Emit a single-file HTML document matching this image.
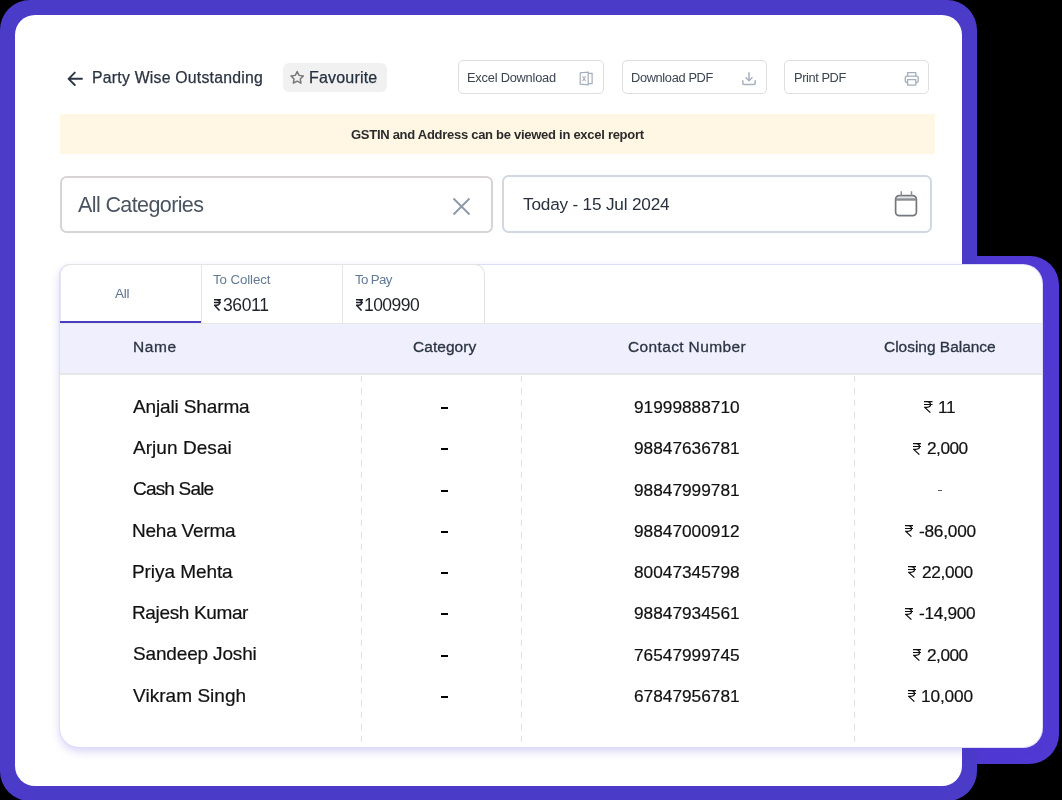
<!DOCTYPE html><html><head><meta charset="utf-8"><style>
*{margin:0;padding:0;box-sizing:border-box}
html,body{width:1062px;height:800px;overflow:hidden;background:#000}
body{position:relative;font-family:"Liberation Sans",sans-serif}
.abs{position:absolute}
.t{position:absolute;white-space:nowrap;will-change:transform}
</style></head><body>
<div class="abs" style="left:560px;top:256px;width:498.5px;height:508px;border-radius:29px 29px 30px 30px;background:#5039D3"></div><div class="abs" style="left:0;top:0;width:977px;height:801px;border-radius:30px;background:#4B3BC9"></div><div class="abs" style="left:15px;top:15px;width:947px;height:771px;border-radius:20px;background:#fff"></div><svg class="abs" style="left:66px;top:69.6px" width="18" height="18" viewBox="0 0 18 18" fill="none" stroke="#2D3643" stroke-width="1.9" stroke-linecap="round" stroke-linejoin="round"><path d="M16 8.8H2.6M8.8 2.6L2.6 8.8L8.8 15"/></svg><div class="t" style="left:92.40px;top:70.03px;font-size:15.8px;line-height:15.8px;color:#2A3441;font-weight:normal;letter-spacing:0.231px;-webkit-text-stroke:0.25px #2A3441">Party Wise Outstanding</div>
<div class="abs" style="left:283px;top:63px;width:104px;height:29px;border-radius:6px;background:#F1F1F1"></div><svg class="abs" style="left:285px;top:65px" width="25" height="25" viewBox="0 0 25 25" fill="none" stroke="#777777" stroke-width="1.45" stroke-linejoin="round"><path d="M12.15 6.5L14.05 10.35L18.3 10.97L15.23 13.97L15.95 18.2L12.15 16.21L8.35 18.2L9.07 13.97L6 10.97L10.25 10.35Z"/></svg><div class="t" style="left:309.40px;top:69.76px;font-size:16px;line-height:16px;color:#263140;font-weight:normal;letter-spacing:0.188px;-webkit-text-stroke:0.25px #263140">Favourite</div>
<div class="abs" style="left:458px;top:60px;width:146px;height:34px;border:1px solid #DEDEDE;border-radius:5px;background:#fff"></div><div class="abs" style="left:621.5px;top:60px;width:145px;height:34px;border:1px solid #DEDEDE;border-radius:5px;background:#fff"></div><div class="abs" style="left:784px;top:60px;width:144.5px;height:34px;border:1px solid #DEDEDE;border-radius:5px;background:#fff"></div><div class="t" style="left:467.40px;top:72.06px;font-size:12.8px;line-height:12.8px;color:#3B4450;font-weight:normal;letter-spacing:-0.203px;">Excel Download</div>
<div class="t" style="left:631.00px;top:72.06px;font-size:12.8px;line-height:12.8px;color:#3B4450;font-weight:normal;letter-spacing:-0.340px;">Download PDF</div>
<div class="t" style="left:793.70px;top:72.06px;font-size:12.8px;line-height:12.8px;color:#3B4450;font-weight:normal;letter-spacing:-0.406px;">Print PDF</div>
<svg class="abs" style="left:578px;top:71px" width="16" height="15" viewBox="0 0 16 15" fill="none" stroke="#A3ADBD" stroke-width="1.2"><path d="M2.2 1.8L10.2 1.2V13.8L2.2 13.2Z"/><path d="M10.2 2.4H14.1V12.7H10.2"/><path d="M4.6 5.2L7.6 10M7.6 5.2L4.6 10" stroke-width="1.1"/></svg><svg class="abs" style="left:741px;top:71px" width="16" height="15" viewBox="0 0 16 15" fill="none" stroke="#A8B1C0" stroke-width="1.5" stroke-linecap="round" stroke-linejoin="round"><path d="M8 1.8V9.5M5 6.8L8 9.8L11 6.8"/><path d="M1.8 9.8V12.2C1.8 13 2.3 13.4 3 13.4H13C13.7 13.4 14.2 13 14.2 12.2V9.8"/></svg><svg class="abs" style="left:904px;top:71px" width="16" height="16" viewBox="0 0 16 16" fill="none" stroke="#A3ADBD" stroke-width="1.3" stroke-linejoin="round"><path d="M3.6 5.2V1.6H11.8V5.2"/><path d="M3.5 11.3H2.4C1.7 11.3 1.3 10.9 1.3 10.2V6.6C1.3 5.8 1.8 5.2 2.6 5.2H12.9C13.6 5.2 14.2 5.8 14.2 6.6V10.2C14.2 10.9 13.8 11.3 13.1 11.3H11.9"/><path d="M3.6 8.7H11.8V14.1H3.6Z"/></svg><div class="abs" style="left:60px;top:114px;width:875px;height:40px;background:#FFF6E4"></div><div class="t" style="left:351.00px;top:128.00px;font-size:13px;line-height:13px;color:#2B2B2B;font-weight:bold;letter-spacing:-0.278px;">GSTIN and Address can be viewed in excel report</div>
<div class="abs" style="left:60px;top:176px;width:433px;height:56.5px;border:2px solid #D8D4D4;border-radius:6.5px;background:#fff"></div><div class="t" style="left:77.90px;top:195.30px;font-size:21.5px;line-height:21.5px;color:#4A5461;font-weight:normal;letter-spacing:-0.607px;">All Categories</div>
<svg class="abs" style="left:451px;top:196px" width="21" height="21" viewBox="0 0 21 21" fill="none" stroke="#8E9AAA" stroke-width="2"><path d="M2.5 2.5L18.5 18.5M18.5 2.5L2.5 18.5"/></svg><div class="abs" style="left:502px;top:175px;width:430px;height:57.5px;border:2px solid #D2D8DF;border-radius:6.5px;background:#fff"></div><div class="t" style="left:522.90px;top:196.24px;font-size:17.2px;line-height:17.2px;color:#28313D;font-weight:normal;letter-spacing:-0.192px;">Today - 15 Jul 2024</div>
<svg class="abs" style="left:892px;top:189px" width="28" height="30" viewBox="0 0 28 30" fill="none" stroke="#74787E" stroke-width="1.7"><path d="M4 8.5H24V11H4Z" fill="#C9CBCF" stroke="none"/><rect x="3.6" y="6.6" width="20.8" height="20" rx="3.6"/><path d="M3.6 10.6H24.4" stroke-width="2.2" stroke="#8A8E93"/><path d="M9.3 2.3V6.8M19.5 2.3V6.8" stroke-width="1.5" stroke="#8C9095"/></svg><div class="abs" style="left:60px;top:265px;width:982px;height:482px;border-radius:10px 19px 19px 19px;background:#fff;box-shadow:0 0 0 1px #DCDCFC, 0 4px 10px rgba(80,60,210,0.24)"></div><div class="abs" style="left:60px;top:264px;width:425px;height:59px;border:1px solid #E3E3E3;border-bottom:none;border-left-color:#E6E4F6;border-radius:10px 10px 0 0;background:#fff"></div><div class="abs" style="left:201px;top:264px;width:1px;height:59px;background:#E6E6E6"></div><div class="abs" style="left:342px;top:264px;width:1px;height:59px;background:#E6E6E6"></div><div class="abs" style="left:60px;top:321px;width:141px;height:2px;background:#4B3BC9"></div><div class="t" style="left:115.00px;top:286.77px;font-size:13.5px;line-height:13.5px;color:#5F7390;font-weight:normal;letter-spacing:-0.252px;">All</div>
<div class="t" style="left:213.10px;top:273.34px;font-size:13.3px;line-height:13.3px;color:#627A96;font-weight:normal;letter-spacing:-0.099px;">To Collect</div>
<div class="t" style="left:355.10px;top:273.34px;font-size:13.3px;line-height:13.3px;color:#627A96;font-weight:normal;letter-spacing:-0.640px;">To Pay</div>
<svg class="abs" style="left:213.70px;top:299.30px" width="7.4" height="12" viewBox="0 0 8 12" preserveAspectRatio="none" fill="none" stroke="#1E232A" stroke-width="1.5"><path d="M0 0.7H8M0 3.5H8M0.6 0.7H2.8C5 0.7 6.1 2 6.1 3.6C6.1 5.2 4.8 6.3 2.8 6.3H0.7L6 11.6"/></svg>
<div class="t" style="left:222.90px;top:297.39px;font-size:17.5px;line-height:17.5px;color:#1E232A;font-weight:normal;letter-spacing:-0.358px;">36011</div>
<svg class="abs" style="left:355.60px;top:299.30px" width="7.4" height="12" viewBox="0 0 8 12" preserveAspectRatio="none" fill="none" stroke="#1E232A" stroke-width="1.5"><path d="M0 0.7H8M0 3.5H8M0.6 0.7H2.8C5 0.7 6.1 2 6.1 3.6C6.1 5.2 4.8 6.3 2.8 6.3H0.7L6 11.6"/></svg>
<div class="t" style="left:363.80px;top:297.39px;font-size:17.5px;line-height:17.5px;color:#1E232A;font-weight:normal;letter-spacing:-0.553px;">100990</div>
<div class="abs" style="left:60px;top:323px;width:982px;height:52px;background:#F0EFFD;border-top:1px solid #E6E6E6;border-bottom:2px solid #E7E7EA"></div><div class="t" style="left:132.90px;top:338.78px;font-size:15.5px;line-height:15.5px;color:#2C3542;font-weight:normal;letter-spacing:0.591px;-webkit-text-stroke:0.3px #2C3542">Name</div>
<div class="t" style="left:412.90px;top:339.08px;font-size:15.5px;line-height:15.5px;color:#2C3542;font-weight:normal;letter-spacing:0.037px;-webkit-text-stroke:0.3px #2C3542">Category</div>
<div class="t" style="left:627.70px;top:339.08px;font-size:15.5px;line-height:15.5px;color:#2C3542;font-weight:normal;letter-spacing:0.362px;-webkit-text-stroke:0.3px #2C3542">Contact Number</div>
<div class="t" style="left:884.25px;top:339.08px;font-size:15.5px;line-height:15.5px;color:#2C3542;font-weight:normal;letter-spacing:-0.021px;-webkit-text-stroke:0.3px #2C3542">Closing Balance</div>
<div class="abs" style="left:361px;top:376px;width:1px;height:368px;background:repeating-linear-gradient(to bottom,#E2E2E2 0 6px,transparent 6px 12px)"></div><div class="abs" style="left:520.5px;top:376px;width:1px;height:368px;background:repeating-linear-gradient(to bottom,#E2E2E2 0 6px,transparent 6px 12px)"></div><div class="abs" style="left:854px;top:376px;width:1px;height:368px;background:repeating-linear-gradient(to bottom,#E2E2E2 0 6px,transparent 6px 12px)"></div><div class="t" style="left:133.10px;top:396.72px;font-size:19px;line-height:19px;color:#111;font-weight:normal;letter-spacing:-0.134px;-webkit-text-stroke:0.2px #111">Anjali Sharma</div>
<div class="abs" style="left:441px;top:407.00px;width:7px;height:2px;background:#000"></div><div class="t" style="left:634.30px;top:399.00px;font-size:17.25px;line-height:17.25px;color:#111;font-weight:normal;letter-spacing:0.006px;-webkit-text-stroke:0.2px #111">91999888710</div>
<svg class="abs" style="left:924.40px;top:401.40px" width="8.5" height="12" viewBox="0 0 8 12" preserveAspectRatio="none" fill="none" stroke="#111" stroke-width="1.2"><path d="M0 0.7H8M0 3.5H8M0.6 0.7H2.8C5 0.7 6.1 2 6.1 3.6C6.1 5.2 4.8 6.3 2.8 6.3H0.7L6 11.6"/></svg>
<div class="t" style="left:938.20px;top:399.00px;font-size:17.25px;line-height:17.25px;color:#111;font-weight:normal;letter-spacing:-0.313px;-webkit-text-stroke:0.2px #111">11</div>
<div class="t" style="left:133.10px;top:437.98px;font-size:19px;line-height:19px;color:#111;font-weight:normal;letter-spacing:0.051px;-webkit-text-stroke:0.2px #111">Arjun Desai</div>
<div class="abs" style="left:441px;top:448.26px;width:7px;height:2px;background:#000"></div><div class="t" style="left:634.30px;top:440.26px;font-size:17.25px;line-height:17.25px;color:#111;font-weight:normal;letter-spacing:0.006px;-webkit-text-stroke:0.2px #111">98847636781</div>
<svg class="abs" style="left:912.50px;top:442.66px" width="8.5" height="12" viewBox="0 0 8 12" preserveAspectRatio="none" fill="none" stroke="#111" stroke-width="1.2"><path d="M0 0.7H8M0 3.5H8M0.6 0.7H2.8C5 0.7 6.1 2 6.1 3.6C6.1 5.2 4.8 6.3 2.8 6.3H0.7L6 11.6"/></svg>
<div class="t" style="left:926.50px;top:440.26px;font-size:17.25px;line-height:17.25px;color:#111;font-weight:normal;letter-spacing:-0.493px;-webkit-text-stroke:0.2px #111">2,000</div>
<div class="t" style="left:133.10px;top:479.24px;font-size:19px;line-height:19px;color:#111;font-weight:normal;letter-spacing:-0.812px;-webkit-text-stroke:0.2px #111">Cash Sale</div>
<div class="abs" style="left:441px;top:489.52px;width:7px;height:2px;background:#000"></div><div class="t" style="left:634.30px;top:481.52px;font-size:17.25px;line-height:17.25px;color:#111;font-weight:normal;letter-spacing:0.006px;-webkit-text-stroke:0.2px #111">98847999781</div>
<div class="abs" style="left:938px;top:489.62px;width:4px;height:1.2px;background:#555"></div><div class="t" style="left:132.10px;top:520.50px;font-size:19px;line-height:19px;color:#111;font-weight:normal;letter-spacing:-0.216px;-webkit-text-stroke:0.2px #111">Neha Verma</div>
<div class="abs" style="left:441px;top:530.78px;width:7px;height:2px;background:#000"></div><div class="t" style="left:634.30px;top:522.78px;font-size:17.25px;line-height:17.25px;color:#111;font-weight:normal;letter-spacing:0.006px;-webkit-text-stroke:0.2px #111">98847000912</div>
<svg class="abs" style="left:904.55px;top:525.18px" width="8.5" height="12" viewBox="0 0 8 12" preserveAspectRatio="none" fill="none" stroke="#111" stroke-width="1.2"><path d="M0 0.7H8M0 3.5H8M0.6 0.7H2.8C5 0.7 6.1 2 6.1 3.6C6.1 5.2 4.8 6.3 2.8 6.3H0.7L6 11.6"/></svg>
<div class="t" style="left:918.55px;top:522.78px;font-size:17.25px;line-height:17.25px;color:#111;font-weight:normal;letter-spacing:-0.235px;-webkit-text-stroke:0.2px #111">-86,000</div>
<div class="t" style="left:132.10px;top:561.76px;font-size:19px;line-height:19px;color:#111;font-weight:normal;letter-spacing:-0.071px;-webkit-text-stroke:0.2px #111">Priya Mehta</div>
<div class="abs" style="left:441px;top:572.04px;width:7px;height:2px;background:#000"></div><div class="t" style="left:634.30px;top:564.04px;font-size:17.25px;line-height:17.25px;color:#111;font-weight:normal;letter-spacing:0.006px;-webkit-text-stroke:0.2px #111">80047345798</div>
<svg class="abs" style="left:907.60px;top:566.44px" width="8.5" height="12" viewBox="0 0 8 12" preserveAspectRatio="none" fill="none" stroke="#111" stroke-width="1.2"><path d="M0 0.7H8M0 3.5H8M0.6 0.7H2.8C5 0.7 6.1 2 6.1 3.6C6.1 5.2 4.8 6.3 2.8 6.3H0.7L6 11.6"/></svg>
<div class="t" style="left:921.60px;top:564.04px;font-size:17.25px;line-height:17.25px;color:#111;font-weight:normal;letter-spacing:-0.353px;-webkit-text-stroke:0.2px #111">22,000</div>
<div class="t" style="left:132.10px;top:603.02px;font-size:19px;line-height:19px;color:#111;font-weight:normal;letter-spacing:-0.360px;-webkit-text-stroke:0.2px #111">Rajesh Kumar</div>
<div class="abs" style="left:441px;top:613.30px;width:7px;height:2px;background:#000"></div><div class="t" style="left:634.30px;top:605.30px;font-size:17.25px;line-height:17.25px;color:#111;font-weight:normal;letter-spacing:0.006px;-webkit-text-stroke:0.2px #111">98847934561</div>
<svg class="abs" style="left:904.80px;top:607.70px" width="8.5" height="12" viewBox="0 0 8 12" preserveAspectRatio="none" fill="none" stroke="#111" stroke-width="1.2"><path d="M0 0.7H8M0 3.5H8M0.6 0.7H2.8C5 0.7 6.1 2 6.1 3.6C6.1 5.2 4.8 6.3 2.8 6.3H0.7L6 11.6"/></svg>
<div class="t" style="left:918.80px;top:605.30px;font-size:17.25px;line-height:17.25px;color:#111;font-weight:normal;letter-spacing:-0.319px;-webkit-text-stroke:0.2px #111">-14,900</div>
<div class="t" style="left:133.10px;top:644.28px;font-size:19px;line-height:19px;color:#111;font-weight:normal;letter-spacing:-0.157px;-webkit-text-stroke:0.2px #111">Sandeep Joshi</div>
<div class="abs" style="left:441px;top:654.56px;width:7px;height:2px;background:#000"></div><div class="t" style="left:634.30px;top:646.56px;font-size:17.25px;line-height:17.25px;color:#111;font-weight:normal;letter-spacing:0.006px;-webkit-text-stroke:0.2px #111">76547999745</div>
<svg class="abs" style="left:912.50px;top:648.96px" width="8.5" height="12" viewBox="0 0 8 12" preserveAspectRatio="none" fill="none" stroke="#111" stroke-width="1.2"><path d="M0 0.7H8M0 3.5H8M0.6 0.7H2.8C5 0.7 6.1 2 6.1 3.6C6.1 5.2 4.8 6.3 2.8 6.3H0.7L6 11.6"/></svg>
<div class="t" style="left:926.50px;top:646.56px;font-size:17.25px;line-height:17.25px;color:#111;font-weight:normal;letter-spacing:-0.493px;-webkit-text-stroke:0.2px #111">2,000</div>
<div class="t" style="left:133.10px;top:685.54px;font-size:19px;line-height:19px;color:#111;font-weight:normal;letter-spacing:0.047px;-webkit-text-stroke:0.2px #111">Vikram Singh</div>
<div class="abs" style="left:441px;top:695.82px;width:7px;height:2px;background:#000"></div><div class="t" style="left:634.30px;top:687.82px;font-size:17.25px;line-height:17.25px;color:#111;font-weight:normal;letter-spacing:0.006px;-webkit-text-stroke:0.2px #111">67847956781</div>
<svg class="abs" style="left:907.60px;top:690.22px" width="8.5" height="12" viewBox="0 0 8 12" preserveAspectRatio="none" fill="none" stroke="#111" stroke-width="1.2"><path d="M0 0.7H8M0 3.5H8M0.6 0.7H2.8C5 0.7 6.1 2 6.1 3.6C6.1 5.2 4.8 6.3 2.8 6.3H0.7L6 11.6"/></svg>
<div class="t" style="left:920.60px;top:687.82px;font-size:17.25px;line-height:17.25px;color:#111;font-weight:normal;letter-spacing:-0.153px;-webkit-text-stroke:0.2px #111">10,000</div>
</body></html>
